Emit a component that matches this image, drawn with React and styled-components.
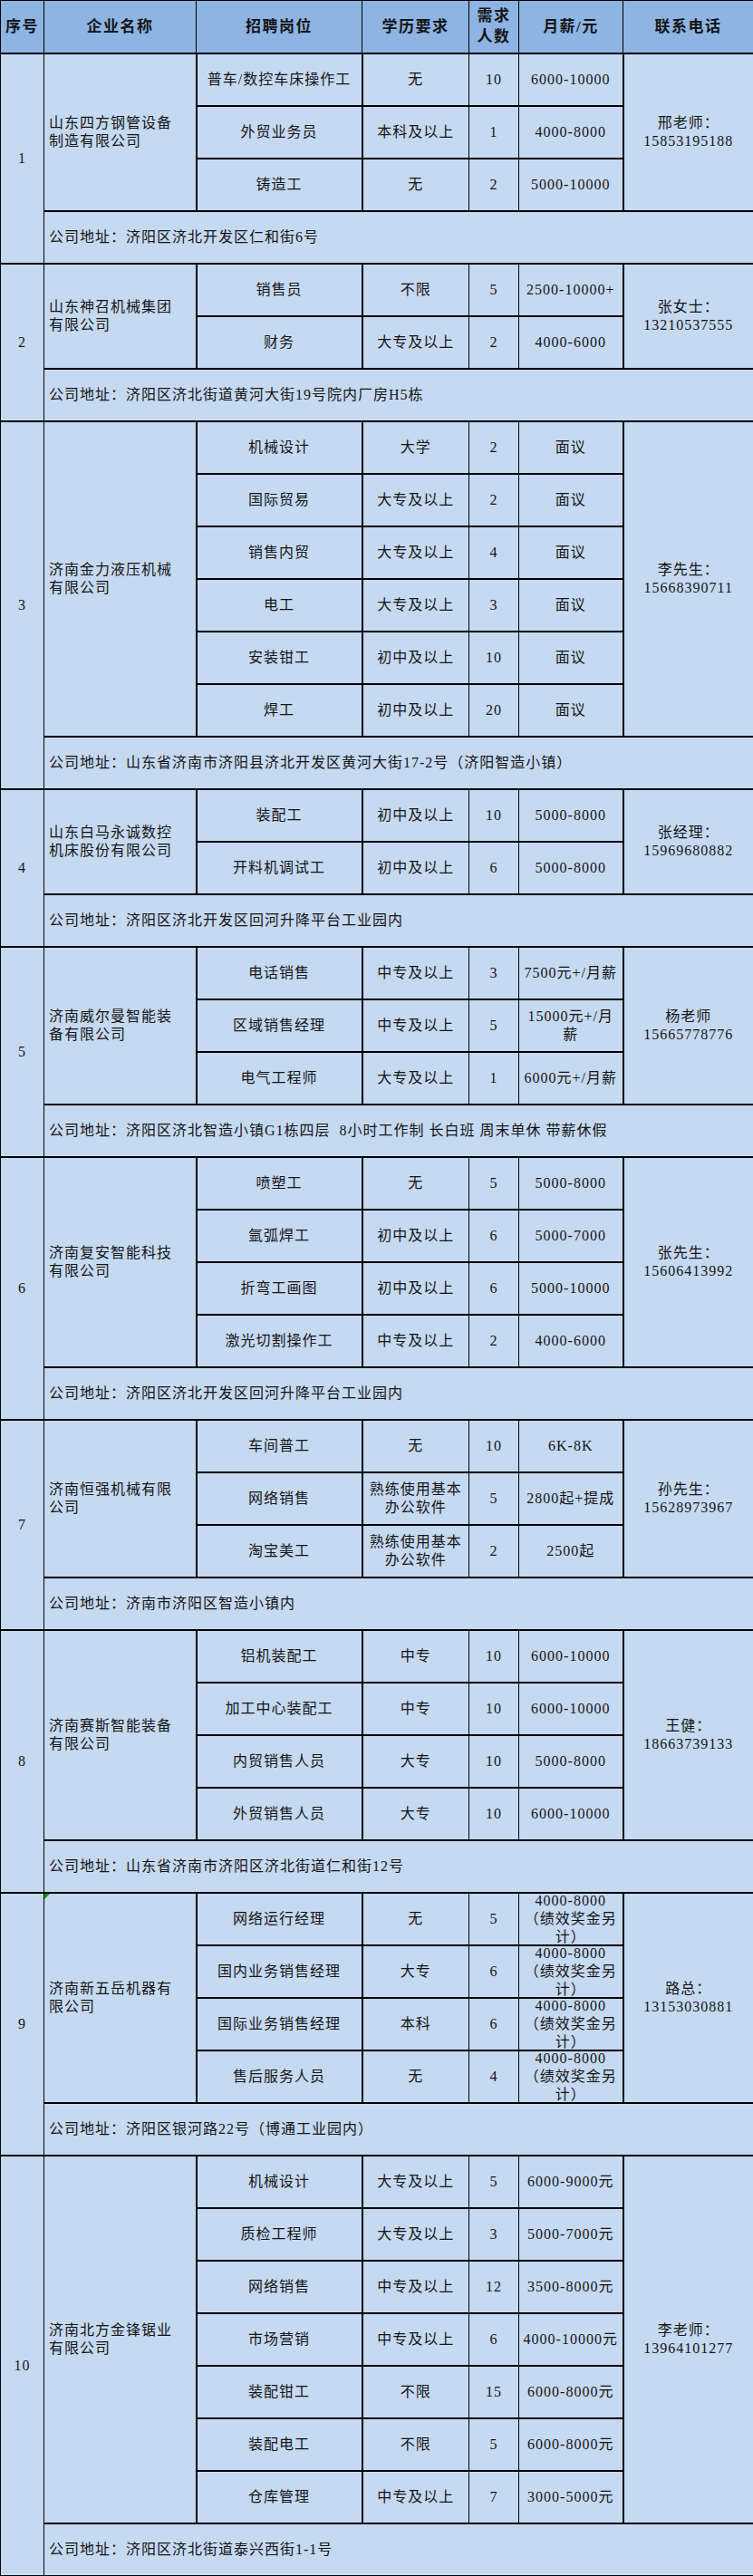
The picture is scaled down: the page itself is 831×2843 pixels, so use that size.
import React from 'react';
import styled, { createGlobalStyle } from 'styled-components';

const GlobalStyle = createGlobalStyle`
  html, body {
    margin: 0;
    padding: 0;
    background: #ffffff;
  }
  body {
    font-family: "Liberation Serif", "Noto Sans CJK SC", serif;
  }
`;

const Table = styled.table`
  width: 831px;
  border-collapse: collapse;
  table-layout: fixed;
  background: #c5d9f1;
  color: #151515;
  font-size: 16px;
  letter-spacing: 1px;
  line-height: 20px;
`;

const Col = styled.col`
  width: ${(p) => p.$w}px;
`;

const Row = styled.tr`
  height: 58px;
`;

const Th = styled.th`
  background: #8db4e2;
  border: 1px solid #000;
  border-bottom-width: 2px;
  padding: 0 2px;
  font-size: 17px;
  font-weight: bold;
  letter-spacing: 1.5px;
  line-height: 23px;
  white-space: pre-line;
  text-align: center;
  vertical-align: middle;
`;

const NumCell = styled.td`
  border: 1px solid #000;
  border-bottom-width: 2px;
  text-align: center;
  vertical-align: middle;
  padding: 0;
`;

const NameCell = styled.td`
  position: relative;
  border: 1px solid #000;
  padding: 0 4px 0 5px;
  text-align: left;
  vertical-align: middle;
  white-space: pre-line;
`;

const Marker = styled.span`
  position: absolute;
  top: 0;
  left: 0;
  width: 0;
  height: 0;
  border-top: 6px solid #00a000;
  border-right: 6px solid transparent;
`;

const JobCell = styled.td`
  border: 1px solid #000;
  border-top-width: 2px;
  border-bottom-width: 2px;
  border-left-width: ${(p) => (p.$thick ? 2 : 1)}px;
  padding: 0 2px;
  text-align: center;
  vertical-align: middle;
  white-space: pre-line;
`;

const Clip = styled.div`
  height: 56px;
  overflow: hidden;
  display: flex;
  flex-direction: column;
  justify-content: center;
`;

const ContactCell = styled.td`
  border: 1px solid #000;
  border-left-width: 2px;
  padding: 0 2px;
  text-align: center;
  vertical-align: middle;
  white-space: pre-line;
`;

const AddressCell = styled.td`
  border: 1px solid #000;
  border-top-width: 2px;
  border-bottom-width: 2px;
  padding: 0 5px;
  text-align: left;
  vertical-align: middle;
  white-space: pre;
`;

const bonus = '4000-8000\n（绩效奖金另\n计）';

const companies = [
  {
    name: ['山东四方钢管设备', '制造有限公司'],
    contact: '邢老师：\n15853195188',
    address: '公司地址：济阳区济北开发区仁和街6号',
    jobs: [
      ['普车/数控车床操作工', '无', '10', '6000-10000'],
      ['外贸业务员', '本科及以上', '1', '4000-8000'],
      ['铸造工', '无', '2', '5000-10000'],
    ],
  },
  {
    name: ['山东神召机械集团', '有限公司'],
    contact: '张女士：\n13210537555',
    address: '公司地址：济阳区济北街道黄河大街19号院内厂房H5栋',
    jobs: [
      ['销售员', '不限', '5', '2500-10000+'],
      ['财务', '大专及以上', '2', '4000-6000'],
    ],
  },
  {
    name: ['济南金力液压机械', '有限公司'],
    contact: '李先生：\n15668390711',
    address: '公司地址：山东省济南市济阳县济北开发区黄河大街17-2号（济阳智造小镇）',
    jobs: [
      ['机械设计', '大学', '2', '面议'],
      ['国际贸易', '大专及以上', '2', '面议'],
      ['销售内贸', '大专及以上', '4', '面议'],
      ['电工', '大专及以上', '3', '面议'],
      ['安装钳工', '初中及以上', '10', '面议'],
      ['焊工', '初中及以上', '20', '面议'],
    ],
  },
  {
    name: ['山东白马永诚数控', '机床股份有限公司'],
    contact: '张经理：\n15969680882',
    address: '公司地址：济阳区济北开发区回河升降平台工业园内',
    jobs: [
      ['装配工', '初中及以上', '10', '5000-8000'],
      ['开料机调试工', '初中及以上', '6', '5000-8000'],
    ],
  },
  {
    name: ['济南威尔曼智能装', '备有限公司'],
    contact: '杨老师\n15665778776',
    address: '公司地址：济阳区济北智造小镇G1栋四层  8小时工作制 长白班 周末单休 带薪休假',
    jobs: [
      ['电话销售', '中专及以上', '3', '7500元+/月薪'],
      ['区域销售经理', '中专及以上', '5', '15000元+/月\n薪'],
      ['电气工程师', '大专及以上', '1', '6000元+/月薪'],
    ],
  },
  {
    name: ['济南复安智能科技', '有限公司'],
    contact: '张先生：\n15606413992',
    address: '公司地址：济阳区济北开发区回河升降平台工业园内',
    jobs: [
      ['喷塑工', '无', '5', '5000-8000'],
      ['氩弧焊工', '初中及以上', '6', '5000-7000'],
      ['折弯工画图', '初中及以上', '6', '5000-10000'],
      ['激光切割操作工', '中专及以上', '2', '4000-6000'],
    ],
  },
  {
    name: ['济南恒强机械有限', '公司'],
    contact: '孙先生：\n15628973967',
    address: '公司地址：济南市济阳区智造小镇内',
    jobs: [
      ['车间普工', '无', '10', '6K-8K'],
      ['网络销售', '熟练使用基本\n办公软件', '5', '2800起+提成'],
      ['淘宝美工', '熟练使用基本\n办公软件', '2', '2500起'],
    ],
  },
  {
    name: ['济南赛斯智能装备', '有限公司'],
    contact: '王健：\n18663739133',
    address: '公司地址：山东省济南市济阳区济北街道仁和街12号',
    jobs: [
      ['铝机装配工', '中专', '10', '6000-10000'],
      ['加工中心装配工', '中专', '10', '6000-10000'],
      ['内贸销售人员', '大专', '10', '5000-8000'],
      ['外贸销售人员', '大专', '10', '6000-10000'],
    ],
  },
  {
    name: ['济南新五岳机器有', '限公司'],
    contact: '路总：\n13153030881',
    address: '公司地址：济阳区银河路22号（博通工业园内）',
    marker: true,
    clip: true,
    jobs: [
      ['网络运行经理', '无', '5', bonus],
      ['国内业务销售经理', '大专', '6', bonus],
      ['国际业务销售经理', '本科', '6', bonus],
      ['售后服务人员', '无', '4', bonus],
    ],
  },
  {
    name: ['济南北方金锋锯业', '有限公司'],
    contact: '李老师：\n13964101277',
    address: '公司地址：济阳区济北街道泰兴西街1-1号',
    jobs: [
      ['机械设计', '大专及以上', '5', '6000-9000元'],
      ['质检工程师', '大专及以上', '3', '5000-7000元'],
      ['网络销售', '中专及以上', '12', '3500-8000元'],
      ['市场营销', '中专及以上', '6', '4000-10000元'],
      ['装配钳工', '不限', '15', '6000-8000元'],
      ['装配电工', '不限', '5', '6000-8000元'],
      ['仓库管理', '中专及以上', '7', '3000-5000元'],
    ],
  },
];

const widths = [48, 168, 183, 118, 55, 115, 144];
const headers = ['序号', '企业名称', '招聘岗位', '学历要求', '需求\n人数', '月薪/元', '联系电话'];

const CompanyBlock = ({ company, index }) => {
  const span = company.jobs.length;
  return (
    <tbody>
      {company.jobs.map((job, k) => (
        <Row key={k}>
          {k === 0 && <NumCell rowSpan={span + 1}>{index + 1}</NumCell>}
          {k === 0 && (
            <NameCell rowSpan={span}>
              {company.marker && <Marker />}
              {company.name.join('\n')}
            </NameCell>
          )}
          <JobCell $thick>{job[0]}</JobCell>
          <JobCell $thick>{job[1]}</JobCell>
          <JobCell>{job[2]}</JobCell>
          <JobCell>{company.clip ? <Clip>{job[3]}</Clip> : job[3]}</JobCell>
          {k === 0 && <ContactCell rowSpan={span}>{company.contact}</ContactCell>}
        </Row>
      ))}
      <Row>
        <AddressCell colSpan={6}>{company.address}</AddressCell>
      </Row>
    </tbody>
  );
};

export default function App() {
  return (
    <>
      <GlobalStyle />
      <Table>
        <colgroup>
          {widths.map((w, i) => (
            <Col key={i} $w={w} />
          ))}
        </colgroup>
        <thead>
          <Row>
            {headers.map((h) => (
              <Th key={h}>{h}</Th>
            ))}
          </Row>
        </thead>
        {companies.map((c, i) => (
          <CompanyBlock key={i} company={c} index={i} />
        ))}
      </Table>
    </>
  );
}
